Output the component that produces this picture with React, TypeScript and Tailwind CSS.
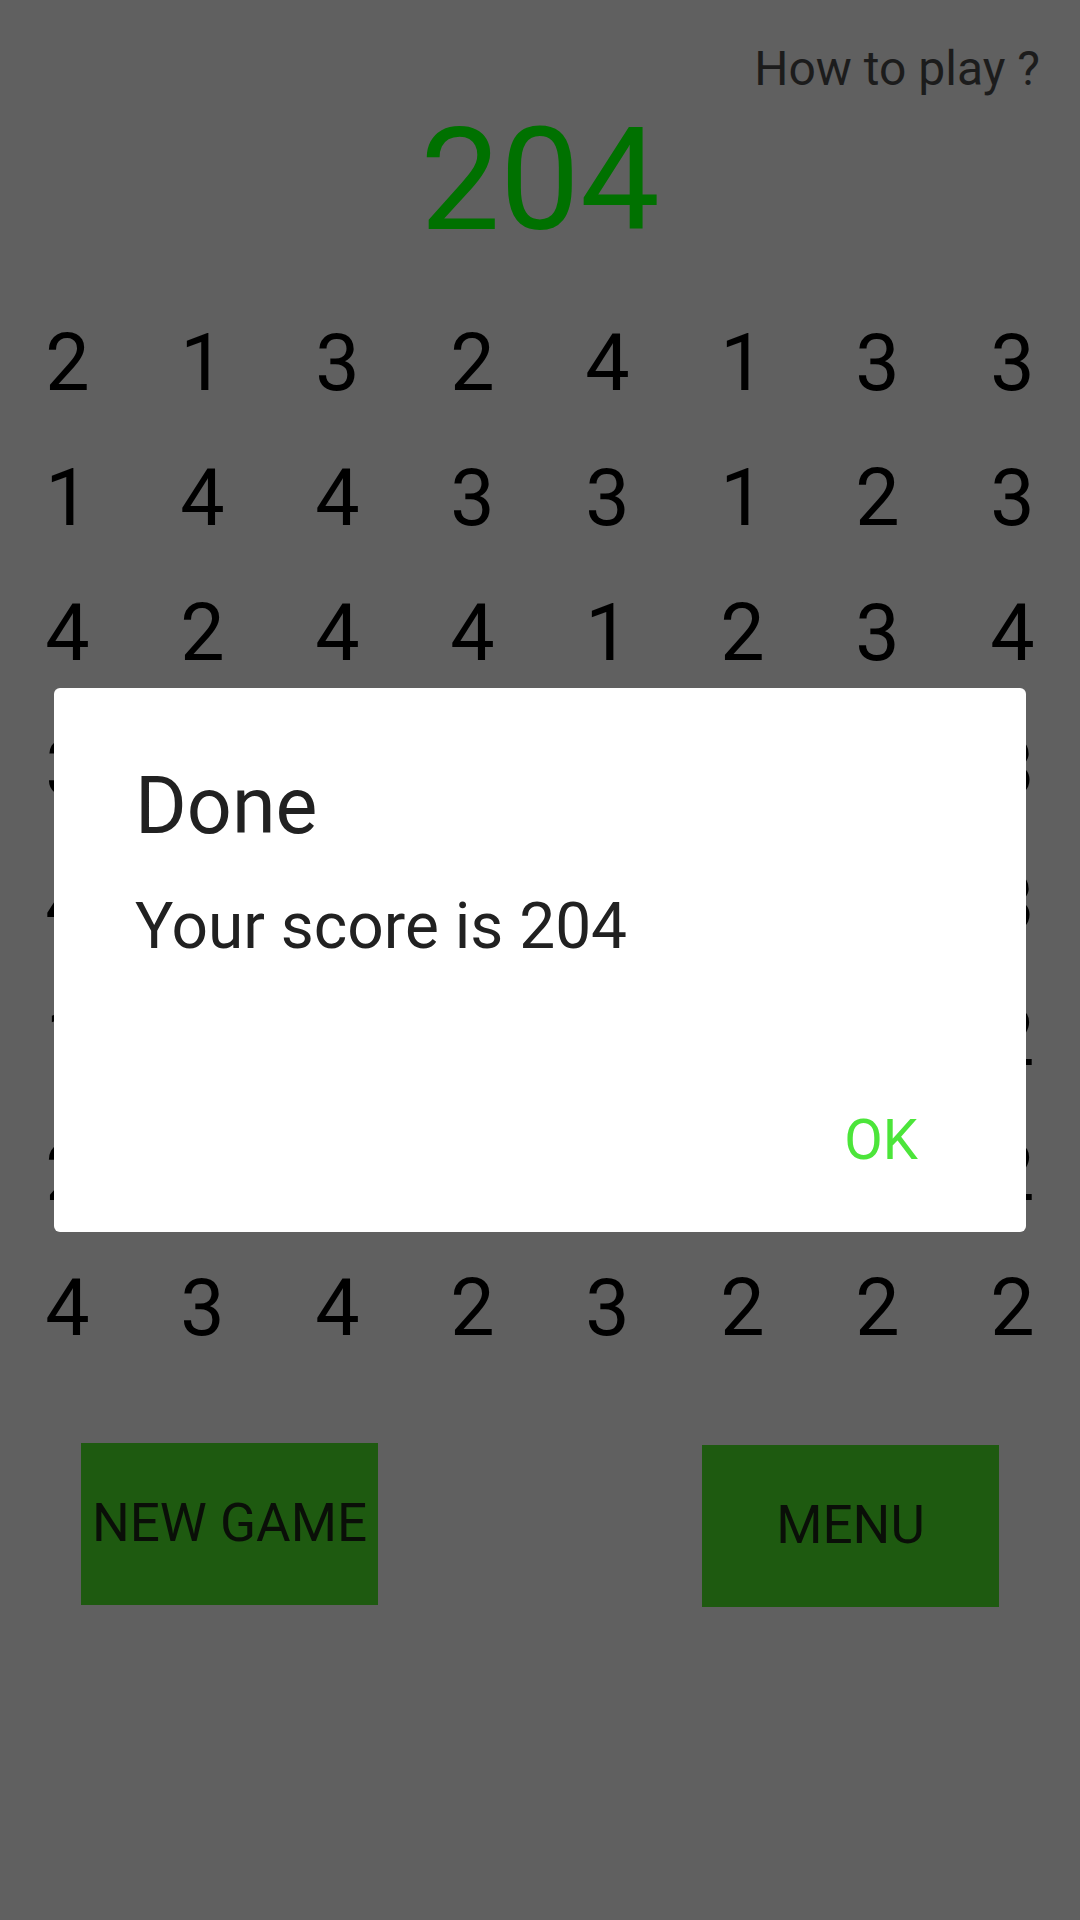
const grid: number[][] = [
  [2, 1, 3, 2, 4, 1, 3, 3],
  [1, 4, 4, 3, 3, 1, 2, 3],
  [4, 2, 4, 4, 1, 2, 3, 4],
  [3, 1, 2, 4, 1, 3, 2, 3],
  [4, 2, 3, 1, 4, 2, 1, 3],
  [1, 3, 2, 4, 3, 1, 4, 2],
  [2, 4, 1, 3, 2, 4, 3, 2],
  [4, 3, 4, 2, 3, 2, 2, 2],
];

function DoneDialog() {
  return (
    <div className="absolute inset-0">
      <div className="absolute left-[54px] top-[688px] w-[972px] h-[544px] bg-white rounded-[6px] flex flex-col pl-[81px] pr-[108px] pt-[72px]">
        <div className="text-[79px] leading-[92px] text-[#212121]">Done</div>
        <div className="mt-[38px] text-[64px] leading-[74px] text-[#212121]">Your score is 204</div>
        <div className="mt-auto mb-[59px] self-end text-[56px] leading-[66px] text-[#4ce53a]">OK</div>
      </div>
    </div>
  );
}

export default function App() {
  return (
    <div
      className="relative w-[1080px] h-[1920px] bg-[#606060] overflow-hidden"
      style={{ fontFamily: "Roboto, 'Noto Sans', sans-serif" }}
    >
      <div className="flex justify-end pt-[45px] pr-[40px]">
        <span className="text-[48px] leading-[48px] text-[#1c1c1c]">How to play ?</span>
      </div>
      <div className="mt-[17px] text-center text-[142px] leading-[142px] text-[#007100]">204</div>
      <div className="mt-[44px] grid grid-cols-8">
        {grid.flat().map((n, i) => (
          <div key={i} className="h-[135px] flex items-center justify-center text-[79px] leading-[135px] text-black">
            {n}
          </div>
        ))}
      </div>
      <div className="mt-[67px] flex items-start pl-[81px] pr-[81px] justify-between">
        <div className="w-[297px] h-[162px] bg-[#1e5a10] flex items-center justify-center text-[53px] text-[#0a0f08]">
          NEW GAME
        </div>
        <div className="mt-[2px] w-[297px] h-[162px] bg-[#1e5a10] flex items-center justify-center text-[53px] text-[#0a0f08]">
          MENU
        </div>
      </div>
      <DoneDialog />
    </div>
  );
}
